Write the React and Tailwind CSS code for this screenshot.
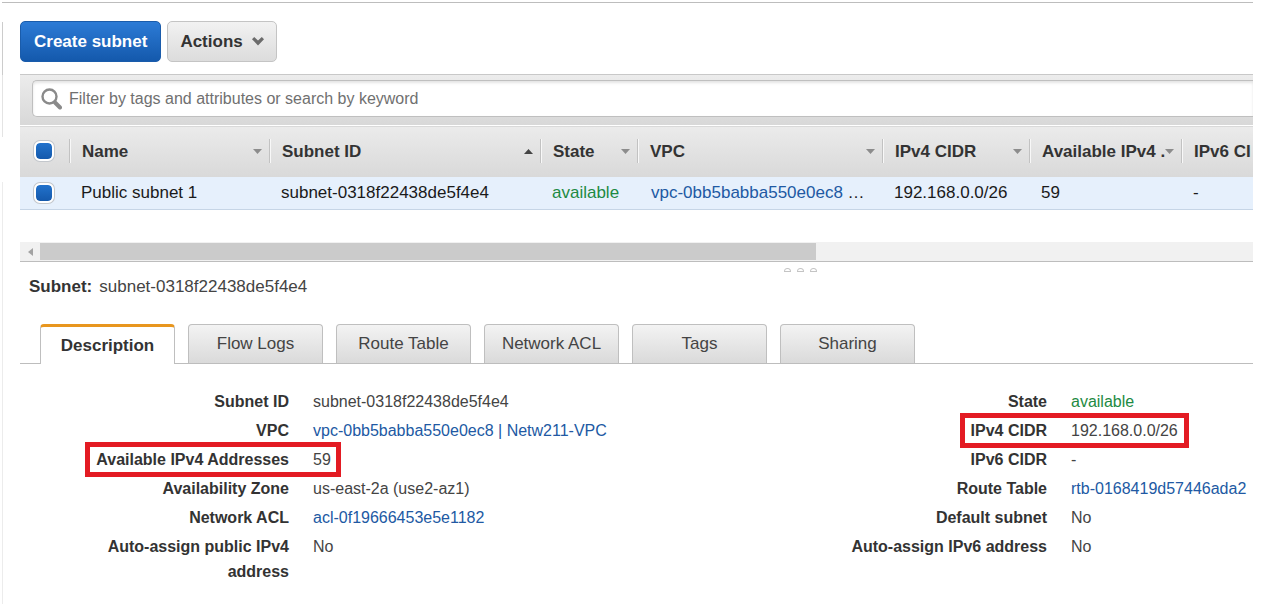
import React from 'react';
import clsx from 'clsx';

const columns = [
  { label: 'Name', width: 'w-[200px]', sort: 'down' },
  { label: 'Subnet ID', width: 'w-[271px]', sort: 'up' },
  { label: 'State', width: 'w-[97px]', sort: 'down' },
  { label: 'VPC', width: 'w-[245px]', sort: 'down' },
  { label: 'IPv4 CIDR', width: 'w-[147px]', sort: 'down' },
  { label: 'Available IPv4 .', width: 'w-[152px]', sort: 'down' },
  { label: 'IPv6 CI', width: 'w-auto' },
];

const tabs = ['Description', 'Flow Logs', 'Route Table', 'Network ACL', 'Tags', 'Sharing'];

const leftDetails = [
  { label: 'Subnet ID', value: 'subnet-0318f22438de5f4e4' },
  { label: 'VPC', value: 'vpc-0bb5babba550e0ec8 | Netw211-VPC', link: true },
  { label: 'Available IPv4 Addresses', value: '59', mark: 'left-[5px] w-[256px]' },
  { label: 'Availability Zone', value: 'us-east-2a (use2-az1)' },
  { label: 'Network ACL', value: 'acl-0f19666453e5e1182', link: true },
  { label: 'Auto-assign public IPv4 address', value: 'No' },
];

const rightDetails = [
  { label: 'State', value: 'available', green: true },
  { label: 'IPv4 CIDR', value: '192.168.0.0/26', mark: 'left-[122px] w-[229px]' },
  { label: 'IPv6 CIDR', value: '-' },
  { label: 'Route Table', value: 'rtb-0168419d57446ada2', link: true },
  { label: 'Default subnet', value: 'No' },
  { label: 'Auto-assign IPv6 address', value: 'No' },
];

function Checkbox({ label }) {
  return (
    <input
      type="checkbox"
      defaultChecked
      aria-label={label}
      className="block size-5 appearance-none rounded-md border-2 border-white bg-white bg-clip-padding shadow-[0_0_0_1px_#c3c7cc] checked:bg-linear-to-b checked:from-[#2272cc] checked:to-[#1459ac]"
    />
  );
}

function SortArrow({ direction }) {
  return (
    <svg viewBox="0 0 9 5" className="h-[5px] w-[9px] shrink-0" aria-hidden="true">
      {direction === 'up' ? (
        <path d="M0 5 4.5 0 9 5Z" fill="#444" />
      ) : (
        <path d="M0 0h9L4.5 5Z" fill="#8c8c8c" />
      )}
    </svg>
  );
}

function Details({ items }) {
  return (
    <dl className="flex flex-col gap-1 text-[16px] leading-[25px]">
      {items.map((item) => (
        <div key={item.label} className="relative flex gap-6">
          <dt className="w-[209px] shrink-0 text-right font-bold text-[#333]">{item.label}</dt>
          <dd className={clsx('whitespace-nowrap', item.green ? 'text-[#1d8a43]' : 'text-[#444]')}>
            {item.link ? (
              <a href="#" className="text-[#2159a3]">{item.value}</a>
            ) : (
              item.value
            )}
          </dd>
          {item.mark && (
            <span className={clsx('pointer-events-none absolute -inset-y-[5px] border-5 border-[#e31b23]', item.mark)} />
          )}
        </div>
      ))}
    </dl>
  );
}

export default function App() {
  return (
    <div className="min-h-screen bg-white pt-[2px] pr-[25px] pl-[2px] font-['Liberation_Sans',Arial,sans-serif] text-[17px] text-[#333]">
      <div className="flex border-t border-[#bdbdbd]">
        {/* Edge of the collapsed navigation */}
        <div className="flex w-[18px] shrink-0 flex-col pt-[19px]">
          <div className="h-[53px] border-l border-[#ccc]" />
          <div className="h-[62px] border-l border-[#e4e4e4]" />
          <div className="mt-[45px] flex-1 border-l border-[#ececec]" />
        </div>

        <main className="min-w-0 flex-1 pt-[18px]">
          {/* Toolbar */}
          <div className="flex gap-[6px]">
            <button className="h-[41px] rounded-[5px] border border-[#1a5cab] bg-linear-to-b from-[#2c7bd6] to-[#1459ac] px-[13px] font-bold whitespace-nowrap text-white">
              Create subnet
            </button>
            <button className="flex h-[41px] items-center gap-[9px] rounded-[5px] border border-[#c4c4c4] bg-linear-to-b from-[#f2f2f2] to-[#dcdcdc] px-3 font-bold">
              Actions
              <svg viewBox="0 0 12 9" className="h-[9px] w-3" aria-hidden="true">
                <path d="M0 2.2 2.2 0 6 3.6 9.8 0 12 2.2 6 8.4Z" fill="#6b6b6b" />
              </svg>
            </button>
          </div>

          {/* Filter */}
          <div className="mt-3 border-t border-[#c8c8c8] bg-linear-to-b from-[#ececec] to-[#d8d8d8] pt-[5px] pb-2 pl-3">
            <label className="flex h-[37px] items-center gap-[7px] rounded-l-[5px] border border-r-0 border-[#bfbfbf] bg-white pl-2 shadow-[inset_0_2px_3px_#e4e4e4]">
              <svg viewBox="0 0 21 22" className="h-[22px] w-[21px] shrink-0" aria-hidden="true">
                <circle cx="8.5" cy="8.5" r="7" fill="none" stroke="#8a8a8a" strokeWidth="2.4" />
                <path d="m14 14.5 5 5" stroke="#8a8a8a" strokeWidth="4" strokeLinecap="round" />
              </svg>
              <input
                type="text"
                aria-label="Filter"
                placeholder="Filter by tags and attributes or search by keyword"
                className="min-w-0 flex-1 bg-transparent text-[16px] outline-none placeholder:text-[#707070]"
              />
            </label>
          </div>

          {/* Subnets */}
          <div className="overflow-hidden">
            <table className="w-full table-fixed border-collapse text-left">
              <thead>
                <tr className="h-[51px] border-t border-white bg-linear-to-b from-[#ebebeb] to-[#d9d9d9]">
                  <th className="w-[49px] pl-[14px]">
                    <Checkbox label="Select all" />
                  </th>
                  {columns.map((column) => (
                    <th key={column.label} className={column.width}>
                      <div
                        className={clsx(
                          'flex h-6 items-center justify-between border-l border-[#c2c2c2] pl-3 whitespace-nowrap shadow-[inset_1px_0_0_#f8f8f8]',
                          column.sort && 'pr-[7px]'
                        )}
                      >
                        {column.label}
                        {column.sort && <SortArrow direction={column.sort} />}
                      </div>
                    </th>
                  ))}
                </tr>
              </thead>
              <tbody>
                <tr className="h-[33px] border-b border-[#c6d5e6] bg-[#e6f0fc] whitespace-nowrap text-[#1a1a1a]">
                  <td className="pl-[14px]">
                    <Checkbox label="Select Public subnet 1" />
                  </td>
                  <td className="pl-3">Public subnet 1</td>
                  <td className="pl-3">subnet-0318f22438de5f4e4</td>
                  <td className="pl-3 text-[#1d8a43]">available</td>
                  <td className="pl-[14px]">
                    <a href="#" className="text-[#2159a3]">vpc-0bb5babba550e0ec8</a> …
                  </td>
                  <td className="pl-3">192.168.0.0/26</td>
                  <td className="pl-3">59</td>
                  <td className="pl-3">-</td>
                </tr>
              </tbody>
            </table>
          </div>

          {/* Horizontal scrollbar */}
          <div className="mt-8 flex h-5 border-b border-[#bdbdbd] bg-[#f1f1f1] py-px">
            <button aria-label="Scroll left" className="flex w-5 items-center justify-center">
              <svg viewBox="0 0 5 8" className="h-2 w-[5px]" aria-hidden="true">
                <path d="M5 0v8L0 4Z" fill="#a3a3a3" />
              </svg>
            </button>
            <div className="flex-1">
              <div className="h-[17px] w-[64%] bg-[#cbcbcb]" />
            </div>
          </div>

          {/* Splitter grip */}
          <div className="flex h-[15px] items-center gap-[6px] pl-[62%]">
            <span className="h-1 w-[7px] rounded-t-sm border border-[#c4c4c4]" />
            <span className="h-1 w-[7px] rounded-t-sm border border-[#c4c4c4]" />
            <span className="h-1 w-[7px] rounded-t-sm border border-[#c4c4c4]" />
          </div>

          <h2 className="pl-[9px] leading-5">
            <b>Subnet:</b>
            <span className="ml-[7px] text-[#444]">subnet-0318f22438de5f4e4</span>
          </h2>

          {/* Tabs */}
          <div role="tablist" className="mt-[27px] flex gap-[13px] border-b border-[#bdbdbd] pl-5">
            {tabs.map((tab, i) => (
              <button
                key={tab}
                role="tab"
                aria-selected={i === 0}
                className={clsx(
                  'w-[135px] rounded-t border border-b-0 border-[#bfbfbf] whitespace-nowrap',
                  i === 0
                    ? '-mb-px h-10 border-t-3 border-t-[#e8961e] bg-white font-bold'
                    : 'h-[39px] bg-linear-to-b from-[#f3f3f3] to-[#dadada] text-[#444]'
                )}
              >
                {tab}
              </button>
            ))}
          </div>

          <div className="grid grid-cols-[758fr_415fr] pt-[25px] pb-5 pl-[60px]">
            <Details items={leftDetails} />
            <Details items={rightDetails} />
          </div>
        </main>
      </div>
    </div>
  );
}
